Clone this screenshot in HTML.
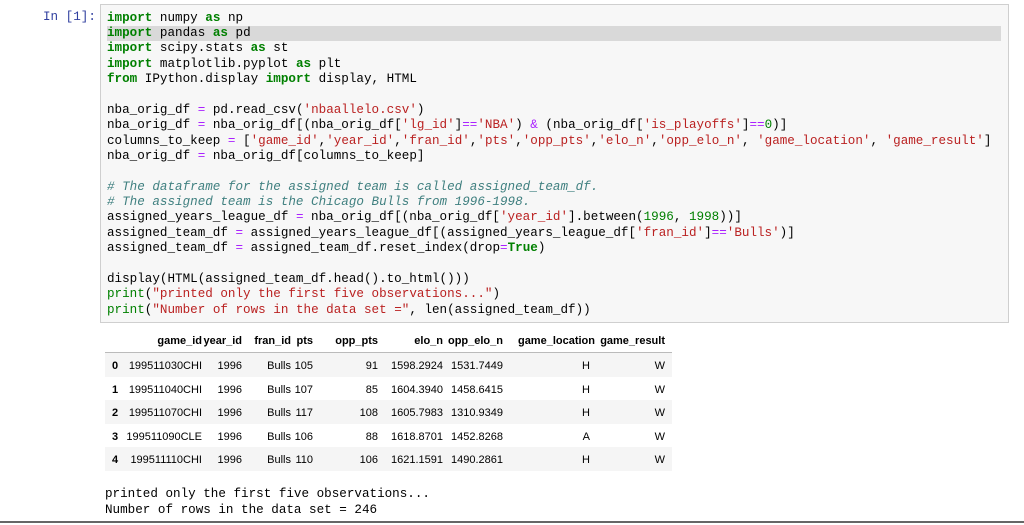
<!DOCTYPE html>
<html><head><meta charset="utf-8"><style>
body{margin:0;width:1024px;height:525px;background:#fff;position:relative;overflow:hidden;font-family:"Liberation Sans",sans-serif}
.prompt{position:absolute;left:43px;top:10px;font:12.6px/15.37px "Liberation Mono",monospace;color:#303f9f}
.box{position:absolute;left:100px;top:4px;width:907px;height:317px;background:#f7f7f7;border:1px solid #cfcfcf}
pre{position:absolute;left:107px;top:10.5px;margin:0;font:12.6px/15.37px "Liberation Mono",monospace;color:#000;white-space:pre}
.hl{position:absolute;left:107px;top:26px;width:894px;height:15px;background:#d9d9d9}
.k{color:#008000;font-weight:bold}.s{color:#ba2121}.o{color:#aa22ff}.c{color:#408080;font-style:italic}.n{color:#008000}
.t{position:absolute;font-size:11px;line-height:12px;white-space:nowrap;color:#000;text-align:right;width:100px}
.l{text-align:left}
.b{font-weight:bold}
.r{position:absolute;left:105px;width:567px;height:23.6px;background:#f5f5f5}
.out{position:absolute;left:105px;top:487px;margin:0;font:12.6px/15.5px "Liberation Mono",monospace}
</style></head><body>
<div class="prompt">In [1]:</div>
<div class="box"></div>
<div class="hl"></div>
<pre><span class="k">import</span> numpy <span class="k">as</span> np
<span class="k">import</span> pandas <span class="k">as</span> pd
<span class="k">import</span> scipy.stats <span class="k">as</span> st
<span class="k">import</span> matplotlib.pyplot <span class="k">as</span> plt
<span class="k">from</span> IPython.display <span class="k">import</span> display, HTML

nba_orig_df <span class="o">=</span> pd.read_csv(<span class="s">'nbaallelo.csv'</span>)
nba_orig_df <span class="o">=</span> nba_orig_df[(nba_orig_df[<span class="s">'lg_id'</span>]<span class="o">==</span><span class="s">'NBA'</span>) <span class="o">&amp;</span> (nba_orig_df[<span class="s">'is_playoffs'</span>]<span class="o">==</span><span class="n">0</span>)]
columns_to_keep <span class="o">=</span> [<span class="s">'game_id'</span>,<span class="s">'year_id'</span>,<span class="s">'fran_id'</span>,<span class="s">'pts'</span>,<span class="s">'opp_pts'</span>,<span class="s">'elo_n'</span>,<span class="s">'opp_elo_n'</span>, <span class="s">'game_location'</span>, <span class="s">'game_result'</span>]
nba_orig_df <span class="o">=</span> nba_orig_df[columns_to_keep]

<span class="c"># The dataframe for the assigned team is called assigned_team_df.</span>
<span class="c"># The assigned team is the Chicago Bulls from 1996-1998.</span>
assigned_years_league_df <span class="o">=</span> nba_orig_df[(nba_orig_df[<span class="s">'year_id'</span>].between(<span class="n">1996</span>, <span class="n">1998</span>))]
assigned_team_df <span class="o">=</span> assigned_years_league_df[(assigned_years_league_df[<span class="s">'fran_id'</span>]<span class="o">==</span><span class="s">'Bulls'</span>)]
assigned_team_df <span class="o">=</span> assigned_team_df.reset_index(drop<span class="o">=</span><span class="k">True</span>)

display(HTML(assigned_team_df.head().to_html()))
<span class="n">print</span>(<span class="s">"printed only the first five observations..."</span>)
<span class="n">print</span>(<span class="s">"Number of rows in the data set ="</span>, len(assigned_team_df))</pre>

<div style="position:absolute;left:105px;top:352px;width:567px;height:1px;background:#bbb"></div>
<div class="r" style="top:353px"></div>
<div class="r" style="top:400.2px"></div>
<div class="r" style="top:447.4px"></div>

<div class="t b" style="top:335px;left:102px">game_id</div>
<div class="t b" style="top:335px;left:142px">year_id</div>
<div class="t b" style="top:335px;left:191px">fran_id</div>
<div class="t b" style="top:335px;left:213px">pts</div>
<div class="t b" style="top:335px;left:278px">opp_pts</div>
<div class="t b" style="top:335px;left:343px">elo_n</div>
<div class="t b" style="top:335px;left:403px">opp_elo_n</div>
<div class="t b" style="top:335px;left:495px">game_location</div>
<div class="t b" style="top:335px;left:565px">game_result</div>

<div class="t b l" style="top:360px;left:112px">0</div>
<div class="t" style="top:360px;left:102px">199511030CHI</div><div class="t" style="top:360px;left:142px">1996</div><div class="t" style="top:360px;left:191px">Bulls</div><div class="t" style="top:360px;left:213px">105</div><div class="t" style="top:360px;left:278px">91</div><div class="t" style="top:360px;left:343px">1598.2924</div><div class="t" style="top:360px;left:403px">1531.7449</div><div class="t" style="top:360px;left:490px">H</div><div class="t" style="top:360px;left:565px">W</div>

<div class="t b l" style="top:383.5px;left:112px">1</div>
<div class="t" style="top:383.5px;left:102px">199511040CHI</div><div class="t" style="top:383.5px;left:142px">1996</div><div class="t" style="top:383.5px;left:191px">Bulls</div><div class="t" style="top:383.5px;left:213px">107</div><div class="t" style="top:383.5px;left:278px">85</div><div class="t" style="top:383.5px;left:343px">1604.3940</div><div class="t" style="top:383.5px;left:403px">1458.6415</div><div class="t" style="top:383.5px;left:490px">H</div><div class="t" style="top:383.5px;left:565px">W</div>

<div class="t b l" style="top:407px;left:112px">2</div>
<div class="t" style="top:407px;left:102px">199511070CHI</div><div class="t" style="top:407px;left:142px">1996</div><div class="t" style="top:407px;left:191px">Bulls</div><div class="t" style="top:407px;left:213px">117</div><div class="t" style="top:407px;left:278px">108</div><div class="t" style="top:407px;left:343px">1605.7983</div><div class="t" style="top:407px;left:403px">1310.9349</div><div class="t" style="top:407px;left:490px">H</div><div class="t" style="top:407px;left:565px">W</div>

<div class="t b l" style="top:430.5px;left:112px">3</div>
<div class="t" style="top:430.5px;left:102px">199511090CLE</div><div class="t" style="top:430.5px;left:142px">1996</div><div class="t" style="top:430.5px;left:191px">Bulls</div><div class="t" style="top:430.5px;left:213px">106</div><div class="t" style="top:430.5px;left:278px">88</div><div class="t" style="top:430.5px;left:343px">1618.8701</div><div class="t" style="top:430.5px;left:403px">1452.8268</div><div class="t" style="top:430.5px;left:490px">A</div><div class="t" style="top:430.5px;left:565px">W</div>

<div class="t b l" style="top:454px;left:112px">4</div>
<div class="t" style="top:454px;left:102px">199511110CHI</div><div class="t" style="top:454px;left:142px">1996</div><div class="t" style="top:454px;left:191px">Bulls</div><div class="t" style="top:454px;left:213px">110</div><div class="t" style="top:454px;left:278px">106</div><div class="t" style="top:454px;left:343px">1621.1591</div><div class="t" style="top:454px;left:403px">1490.2861</div><div class="t" style="top:454px;left:490px">H</div><div class="t" style="top:454px;left:565px">W</div>

<pre class="out">printed only the first five observations...
Number of rows in the data set = 246</pre>
<div style="position:absolute;left:0;top:521px;width:1024px;height:2px;background:#666"></div>
</body></html>
